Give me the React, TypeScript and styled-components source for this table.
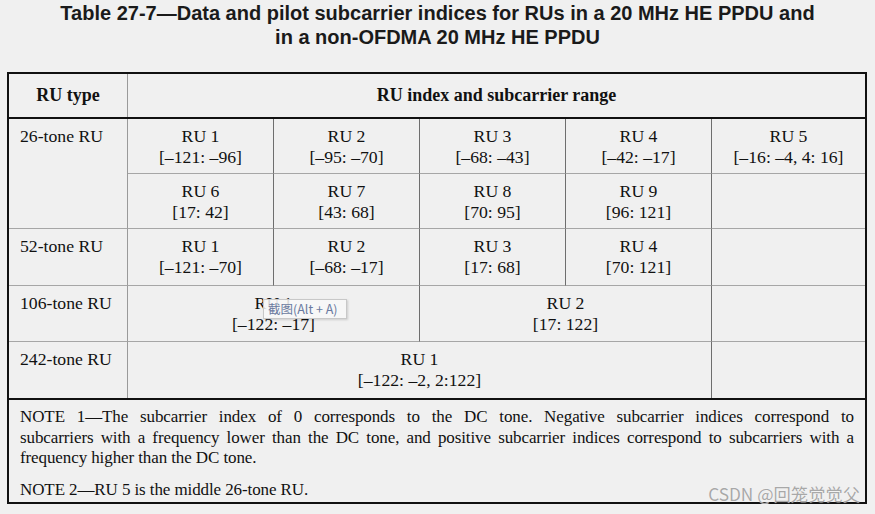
import React from "react";
import styled, { createGlobalStyle } from "styled-components";

const GlobalStyle = createGlobalStyle`
  html, body {
    margin: 0;
    padding: 0;
    background: #f0f0f0;
  }
  body {
    width: 875px;
    height: 514px;
    overflow: hidden;
  }
`;

const Page = styled.div`
  position: relative;
  width: 875px;
  height: 514px;
  padding-top: 1px;
  box-sizing: border-box;
  color: #111;
`;

const Title = styled.h1`
  margin: 0;
  font-family: "Liberation Sans", Arial, sans-serif;
  font-weight: 700;
  font-size: 20px;
  line-height: 24px;
  text-align: center;
  color: #1a1a1a;
`;

const StyledTable = styled.div`
  margin: 23px 0 0 7px;
  width: 860px;
  border: 2px solid #111;
  box-sizing: border-box;
  font-family: "Liberation Serif", "Times New Roman", serif;
  font-size: 17.7px;
  line-height: 21px;
`;

const HeaderRow = styled.div`
  display: grid;
  grid-template-columns: 119px 1fr;
  height: 45px;
  border-bottom: 2px solid #111;
  box-sizing: border-box;
  font-weight: 700;
  font-size: 18px;
`;

const HeaderCell = styled.div<{ $divider?: boolean }>`
  display: flex;
  align-items: center;
  justify-content: center;
  border-right: ${(p) => (p.$divider ? "1px solid #9a9a9a" : "none")};
`;

const Body = styled.div`
  display: grid;
  grid-template-columns: 119px repeat(4, 146px) 1fr;
  grid-template-rows: 55px 55px 57px 56px 56px;
`;

const Cell = styled.div<{ $col: string; $row: string; $left?: boolean; $lastCol?: boolean; $lastRow?: boolean }>`
  grid-column: ${(p) => p.$col};
  grid-row: ${(p) => p.$row};
  box-sizing: border-box;
  padding: 7px 0 0 ${(p) => (p.$left ? "11px" : "0")};
  text-align: ${(p) => (p.$left ? "left" : "center")};
  border-right: ${(p) => (p.$lastCol ? "none" : p.$left ? "1px solid #9a9a9a" : "1px solid #6e6e6e")};
  border-bottom: ${(p) => (p.$lastRow ? "none" : "1px solid #a6a6a6")};
`;

const Notes = styled.div`
  border-top: 2px solid #111;
  padding: 7px 11px 0 11px;
  height: 104px;
  box-sizing: border-box;
  font-size: 17px;
  line-height: 20.5px;
`;

const Note = styled.div`
  margin: 0 0 11px 0;
`;

const NoteLine = styled.div<{ $last?: boolean }>`
  white-space: nowrap;
  letter-spacing: -0.1px;
  text-align: ${(p) => (p.$last ? "left" : "justify")};
  text-align-last: ${(p) => (p.$last ? "left" : "justify")};
`;

const Watermark = styled.div`
  position: absolute;
  right: 15px;
  bottom: 10px;
  font-family: "Noto Sans CJK SC", "Noto Sans", sans-serif;
  font-size: 17.3px;
  line-height: 20px;
  color: #a8a8a8;
  text-shadow: 0 0 1px #fff;
`;

const Tooltip = styled.div`
  position: absolute;
  left: 263px;
  top: 299px;
  width: 84px;
  height: 20px;
  box-sizing: border-box;
  padding-left: 4px;
  background: rgba(248, 248, 248, 0.85);
  border: 1px solid #c8c8c8;
  box-shadow: 1px 1px 2px rgba(0, 0, 0, 0.15);
  font-family: "Noto Sans CJK SC", "Noto Sans", sans-serif;
  font-size: 12.5px;
  line-height: 18px;
  color: #6a7aa0;
  white-space: nowrap;
`;

type RuCell = { col: string; row: string; name?: string; range?: string; lastCol?: boolean; lastRow?: boolean };

const typeCells = [
  { row: "1 / 3", label: "26-tone RU" },
  { row: "3 / 4", label: "52-tone RU" },
  { row: "4 / 5", label: "106-tone RU" },
  { row: "5 / 6", label: "242-tone RU" },
];

const ruCells: RuCell[] = [
  { col: "2", row: "1", name: "RU 1", range: "[–121: –96]" },
  { col: "3", row: "1", name: "RU 2", range: "[–95: –70]" },
  { col: "4", row: "1", name: "RU 3", range: "[–68: –43]" },
  { col: "5", row: "1", name: "RU 4", range: "[–42: –17]" },
  { col: "6", row: "1", name: "RU 5", range: "[–16: –4, 4: 16]", lastCol: true },
  { col: "2", row: "2", name: "RU 6", range: "[17: 42]" },
  { col: "3", row: "2", name: "RU 7", range: "[43: 68]" },
  { col: "4", row: "2", name: "RU 8", range: "[70: 95]" },
  { col: "5", row: "2", name: "RU 9", range: "[96: 121]" },
  { col: "6", row: "2", lastCol: true },
  { col: "2", row: "3", name: "RU 1", range: "[–121: –70]" },
  { col: "3", row: "3", name: "RU 2", range: "[–68: –17]" },
  { col: "4", row: "3", name: "RU 3", range: "[17: 68]" },
  { col: "5", row: "3", name: "RU 4", range: "[70: 121]" },
  { col: "6", row: "3", lastCol: true },
  { col: "2 / 4", row: "4", name: "RU 1", range: "[–122: –17]" },
  { col: "4 / 6", row: "4", name: "RU 2", range: "[17: 122]" },
  { col: "6", row: "4", lastCol: true },
  { col: "2 / 6", row: "5", name: "RU 1", range: "[–122: –2, 2:122]", lastRow: true },
  { col: "6", row: "5", lastCol: true, lastRow: true },
];

const note1 = [
  "NOTE 1—The subcarrier index of 0 corresponds to the DC tone. Negative subcarrier indices correspond to",
  "subcarriers with a frequency lower than the DC tone, and positive subcarrier indices correspond to subcarriers with a",
  "frequency higher than the DC tone.",
];

export default function App() {
  return (
    <Page>
      <GlobalStyle />
      <Title>
        Table 27-7—Data and pilot subcarrier indices for RUs in a 20 MHz HE PPDU and
        <br />
        in a non-OFDMA 20 MHz HE PPDU
      </Title>
      <StyledTable role="table">
        <HeaderRow role="row">
          <HeaderCell $divider>RU type</HeaderCell>
          <HeaderCell>RU index and subcarrier range</HeaderCell>
        </HeaderRow>
        <Body>
          {typeCells.map((t) => (
            <Cell key={t.label} $col="1" $row={t.row} $left $lastRow={t.row === "5 / 6"}>
              {t.label}
            </Cell>
          ))}
          {ruCells.map((c, i) => (
            <Cell key={i} $col={c.col} $row={c.row} $lastCol={c.lastCol} $lastRow={c.lastRow}>
              {c.name && (
                <>
                  {c.name}
                  <br />
                  {c.range}
                </>
              )}
            </Cell>
          ))}
        </Body>
        <Notes>
          <Note>
            {note1.map((line, i) => (
              <NoteLine key={i} $last={i === note1.length - 1}>
                {line}
              </NoteLine>
            ))}
          </Note>
          <Note>
            <NoteLine $last>NOTE 2—RU 5 is the middle 26-tone RU.</NoteLine>
          </Note>
        </Notes>
      </StyledTable>
      <Tooltip>截图(Alt + A)</Tooltip>
      <Watermark>CSDN @回笼觉觉父</Watermark>
    </Page>
  );
}
